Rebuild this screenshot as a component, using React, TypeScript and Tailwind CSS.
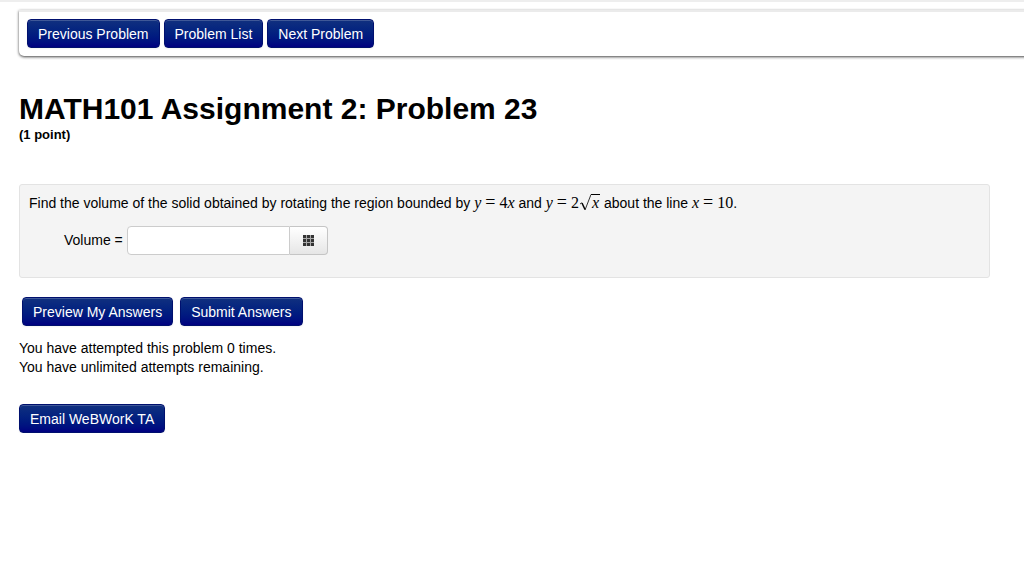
import { useState } from "react"
import type { ReactNode } from "react"

const buttonStyle = "h-[29px] rounded-[4px] border border-[#00106e] bg-linear-to-b from-[#11307f] to-[#000080] px-[10px] text-[14px] leading-5 whitespace-nowrap text-white shadow-[inset_0_1px_0_rgba(255,255,255,0.2),0_1px_2px_rgba(0,0,0,0.05)]"

const navLinks = ["Previous Problem", "Problem List", "Next Problem"]

const MathText = ({ children }: { children: ReactNode }) => (
    <span className="font-['Liberation_Serif',serif] text-[16px] leading-5 whitespace-nowrap">{children}</span>
)

const Equals = () => <span className="mx-1 text-[18px] leading-4">=</span>

const SquareRoot = ({ children }: { children: ReactNode }) => (
    <span className="inline-flex items-baseline">
        <svg width="12" height="17" viewBox="0 0 12 17" className="self-end" fill="none" stroke="currentColor" aria-hidden="true">
            <path d="M1 10 L3 8.7" strokeWidth="0.8" />
            <path d="M3 9 L6 15.5" strokeWidth="1.5" />
            <path d="M6 16 L12 0.5" strokeWidth="0.8" />
        </svg>
        <span className="border-t border-black px-px leading-4">{children}</span>
    </span>
)

const KeypadIcon = () => (
    <svg width="11" height="11" viewBox="0 0 11 11" fill="#333333" aria-hidden="true">
        <rect width="11" height="11" fill="#a8a8a8" />
        {[0, 4, 8].map((y) => [0, 4, 8].map((x) => (
            <rect key={`${x}-${y}`} x={x} y={y} width="3" height="3" />
        )))}
    </svg>
)

const App = () => {
    const [volume, setVolume] = useState<string>('')

    return (
        <div className="overflow-x-clip border-t-2 border-[#eeeeee] bg-white pt-2 font-['Liberation_Sans',Arial,sans-serif] text-[14px] leading-5 text-black">
            <nav className="-mr-2 ml-[19px] flex gap-1 rounded-bl-[5px] border-t-2 border-[#ebebeb] px-2 pt-[7px] pb-2 shadow-[0_1px_3px_#444444]">
                {navLinks.map((label) => (
                    <a key={label} href="#" className={`${buttonStyle} flex items-center`}>{label}</a>
                ))}
            </nav>

            <main className="pt-[33px] pr-[34px] pl-[19px]">
                <h1 className="text-[30px] leading-10 font-bold">MATH101 Assignment 2: Problem 23</h1>
                <h2 className="text-[13px] leading-3 font-bold">(1 point)</h2>

                <form onSubmit={(e) => e.preventDefault()}>
                    <div className="mt-[43px] h-[94px] rounded-[3px] border border-[#e3e3e3] bg-[#f4f4f4] px-[9px] pt-2">
                        <p>
                            Find the volume of the solid obtained by rotating the region bounded by{' '}
                            <MathText><i>y</i><Equals />4<i>x</i></MathText> and{' '}
                            <MathText><i>y</i><Equals />2<SquareRoot><i>x</i></SquareRoot></MathText> about the line{' '}
                            <MathText><i>x</i><Equals />10</MathText>.
                        </p>
                        <div className="mt-[13px] ml-[35px] flex gap-1">
                            <label htmlFor="volume" className="pt-1">Volume =</label>
                            <div className="flex">
                                <input
                                    id="volume"
                                    type="text"
                                    value={volume}
                                    onChange={(e) => setVolume(e.target.value)}
                                    className="h-[29px] w-[163px] rounded-l-[4px] border border-[#cccccc] bg-white px-[6px] outline-none"
                                />
                                <button
                                    type="button"
                                    aria-label="Open equation editor"
                                    className="flex h-[29px] w-[38px] items-center justify-center rounded-r-[4px] border border-l-0 border-[#c5c5c5] bg-linear-to-b from-white to-[#e6e6e6]"
                                >
                                    <KeypadIcon />
                                </button>
                            </div>
                        </div>
                    </div>

                    <div className="mt-[19px] ml-[3px] flex gap-[7px]">
                        <button type="button" className={buttonStyle}>Preview My Answers</button>
                        <button type="submit" className={buttonStyle}>Submit Answers</button>
                    </div>
                </form>

                <p className="mt-[13px] leading-[19px]">
                    You have attempted this problem 0 times.<br />
                    You have unlimited attempts remaining.
                </p>

                <button type="button" className={`${buttonStyle} mt-[27px]`}>Email WeBWorK TA</button>
            </main>
        </div>
    )
}

export default App
